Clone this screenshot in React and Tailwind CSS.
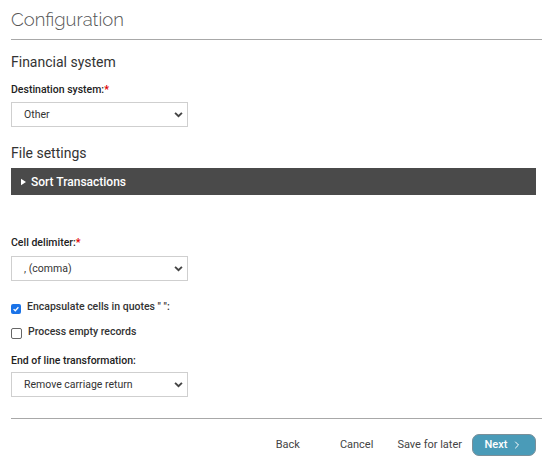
import { ChevronRight } from "lucide-react";

const font = { fontFamily: "Roboto, 'Liberation Sans', sans-serif" };

function Select({ value }) {
  return (
    <div className="flex h-[25px] w-[177px] items-center justify-between border border-[#cfcfcf] bg-white pl-3 pr-[4px] text-[10.5px] leading-[14px] text-[#333]">
      <span>{value}</span>
      <svg viewBox="0 0 10 7" className="h-[6px] w-[9px]">
        <path d="M1 1 L5 5 L9 1" fill="none" stroke="#444" strokeWidth="2.2" />
      </svg>
    </div>
  );
}

function Label({ children, required }) {
  return (
    <div className="text-[10.5px] font-medium leading-[14px] text-[#222]">
      {children}
      {required && <span className="font-bold text-[#e00000]">*</span>}
    </div>
  );
}

function Check({ checked, label }) {
  return (
    <label className="flex items-center gap-[6px] text-[10.5px] font-medium leading-[14px] text-[#333]">
      <span
        className={
          checked
            ? "mt-[3px] flex h-[10px] w-[10px] items-center justify-center rounded-[2px] bg-[#1a73e8]"
            : "mt-[3px] h-[11px] w-[11px] rounded-[2px] border border-[#666] bg-white"
        }
      >
        {checked && (
          <svg viewBox="0 0 10 10" className="h-[8px] w-[8px]">
            <path d="M2 5.2 L4.1 7.2 L8 2.8" fill="none" stroke="white" strokeWidth="1.6" />
          </svg>
        )}
      </span>
      {label}
    </label>
  );
}

export default function App() {
  return (
    <div className="h-[467px] w-[547px] bg-white px-[11px] pt-[8px]" style={font}>
      <h1
        className="text-[18.5px] font-light leading-[24px] text-[#555]"
        style={{ fontFamily: "Raleway, Lato, 'Open Sans', sans-serif" }}
      >
        Configuration
      </h1>
      <div className="mr-[-6px] mt-[7px] border-t border-[#a8a8a8]" />

      <h2 className="mt-[13px] text-[14px] leading-[18px] text-[#333]">Financial system</h2>
      <div className="mt-[12px]">
        <Label required>Destination system:</Label>
      </div>
      <div className="mt-[5px]">
        <Select value="Other" />
      </div>

      <h2 className="mt-[17px] text-[14px] leading-[18px] text-[#333]">File settings</h2>
      <div className="mt-[6px] flex h-[27px] items-center gap-[5px] bg-[#4a4a4a] pl-[10px] text-[12px] font-medium text-white">
        <svg viewBox="0 0 6 8" className="h-[8px] w-[5px]">
          <path d="M0 0 L6 4 L0 8 Z" fill="white" />
        </svg>
        Sort Transactions
      </div>

      <div className="mt-[41px]">
        <Label required>Cell delimiter:</Label>
      </div>
      <div className="mt-[6px]">
        <Select value=", (comma)" />
      </div>

      <div className="mt-[19px] flex flex-col gap-[11px]">
        <Check checked label={'Encapsulate cells in quotes " ":'} />
        <Check label="Process empty records" />
      </div>

      <div className="mt-[15px]">
        <Label>End of line transformation:</Label>
      </div>
      <div className="mt-[4px]">
        <Select value="Remove carriage return" />
      </div>

      <div className="mr-[-6px] mt-[21px] border-t border-[#a8a8a8]" />

      <div className="mt-[15px] flex items-center justify-end text-[11px] leading-[14px] text-[#444]">
        <button className="mr-[40px]">Back</button>
        <button className="mr-[24px]">Cancel</button>
        <button className="mr-[10px]">Save for later</button>
        <button className="flex h-[22px] w-[64px] items-center justify-center gap-[4px] rounded-[7px] border border-[#7a8f99] bg-[#4a9bb8] font-medium text-white">
          Next
          <ChevronRight className="h-3 w-3" strokeWidth={2} />
        </button>
      </div>
    </div>
  );
}
